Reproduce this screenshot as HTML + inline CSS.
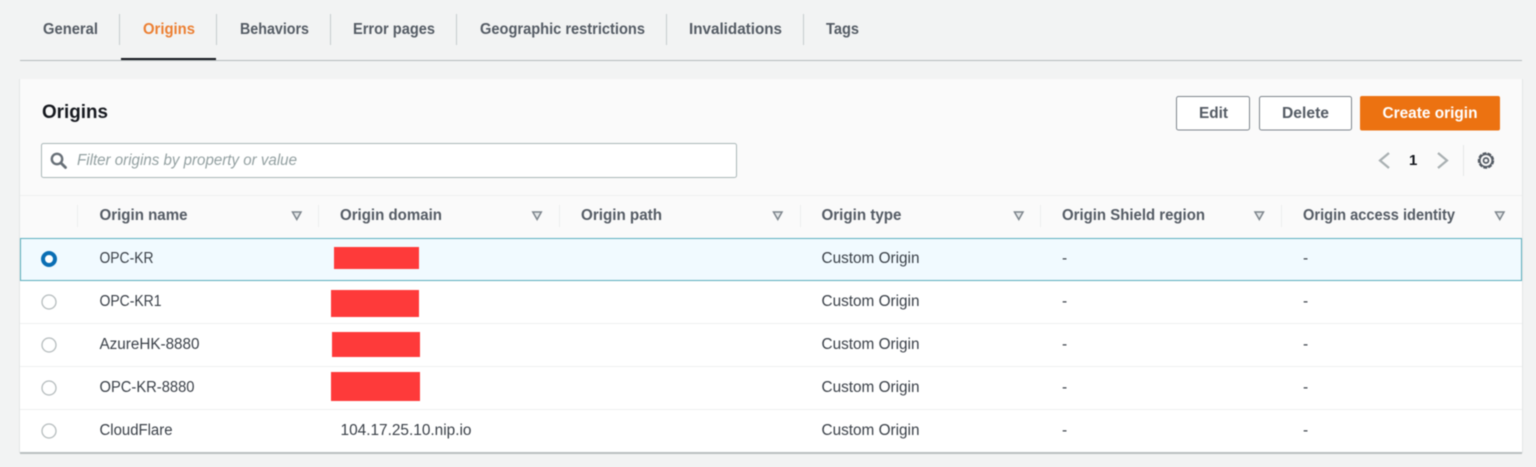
<!DOCTYPE html>
<html>
<head>
<meta charset="utf-8">
<style>
html,body{margin:0;padding:0;width:1536px;height:467px;overflow:hidden;background:#f2f3f3}
svg{display:block;filter:blur(.4px)}
text{font-family:"Liberation Sans",sans-serif;font-size:15.5px;dominant-baseline:auto}
.b{font-weight:700}
.t{fill:#545b64;font-weight:700}
.c{fill:#3a4048}
.h{fill:#545b64;font-weight:700}
</style>
</head>
<body>
<svg width="1536" height="467" viewBox="0 0 1536 467" xmlns="http://www.w3.org/2000/svg">
<rect width="1536" height="467" fill="#f2f3f3"/>

<!-- tabs -->
<text class="t" x="43" y="34" textLength="55" lengthAdjust="spacingAndGlyphs">General</text>
<text class="t" x="143" y="34" textLength="52" lengthAdjust="spacingAndGlyphs" style="fill:#ec7f32">Origins</text>
<text class="t" x="240" y="34" textLength="69" lengthAdjust="spacingAndGlyphs">Behaviors</text>
<text class="t" x="353" y="34" textLength="82" lengthAdjust="spacingAndGlyphs">Error pages</text>
<text class="t" x="480" y="34" textLength="165" lengthAdjust="spacingAndGlyphs">Geographic restrictions</text>
<text class="t" x="689" y="34" textLength="93" lengthAdjust="spacingAndGlyphs">Invalidations</text>
<text class="t" x="826" y="34" textLength="33" lengthAdjust="spacingAndGlyphs">Tags</text>
<g fill="#c6cccd">
<rect x="119" y="14" width="1" height="31"/><rect x="216" y="14" width="1" height="31"/>
<rect x="330" y="14" width="1" height="31"/><rect x="456" y="14" width="1" height="31"/>
<rect x="666" y="14" width="1" height="31"/><rect x="803" y="14" width="1" height="31"/>
</g>
<rect x="20" y="60" width="1502" height="1" fill="#b4bbbc"/>
<rect x="121" y="58" width="95" height="2" fill="#16191f"/>

<!-- card -->
<rect x="20" y="79" width="1502" height="374" fill="#fff"/>
<rect x="20" y="79" width="1502" height="159" fill="#fafafa"/>
<rect x="20" y="452" width="1502" height="2" fill="#b9bfc0"/>
<rect x="19" y="79" width="1" height="374" fill="#e3e6e6"/>
<rect x="1522" y="79" width="1" height="374" fill="#e3e6e6"/>

<text x="42" y="118" textLength="66" lengthAdjust="spacingAndGlyphs" style="font-size:19.5px;font-weight:700;fill:#16191f">Origins</text>

<!-- buttons -->
<rect x="1176.5" y="96.5" width="73" height="33.5" rx="2" fill="#fff" stroke="#7d858c"/>
<text class="t" x="1199" y="118" textLength="29" lengthAdjust="spacingAndGlyphs">Edit</text>
<rect x="1259.5" y="96.5" width="92" height="33.5" rx="2" fill="#fff" stroke="#7d858c"/>
<text class="t" x="1282" y="118" textLength="47" lengthAdjust="spacingAndGlyphs">Delete</text>
<rect x="1360" y="96" width="140" height="34.5" rx="2" fill="#ec7211"/>
<text class="b" x="1382.5" y="118" textLength="95" lengthAdjust="spacingAndGlyphs" style="fill:#fff">Create origin</text>

<!-- filter -->
<rect x="41.5" y="143.5" width="695" height="34" rx="2" fill="#fff" stroke="#aab7b8"/>
<circle cx="57" cy="159" r="5.2" fill="none" stroke="#687078" stroke-width="2.4"/>
<path d="M61 163l4.5 4.5" stroke="#687078" stroke-width="2.8" fill="none" stroke-linecap="round"/>
<text x="77" y="165" textLength="220" lengthAdjust="spacingAndGlyphs" style="font-style:italic;fill:#93a0a1">Filter origins by property or value</text>

<!-- pagination -->
<path d="M1389 153l-9 7.5 9 7.5" fill="none" stroke="#a9b0b2" stroke-width="2.2"/>
<text x="1409" y="165" style="font-weight:700;fill:#16191f;font-size:15px">1</text>
<path d="M1438 153l9 7.5-9 7.5" fill="none" stroke="#a9b0b2" stroke-width="2.2"/>
<rect x="1463" y="145" width="1" height="31" fill="#e6e8e8"/>
<circle cx="1486" cy="160.5" r="7" fill="none" stroke="#545b64" stroke-width="2.4" stroke-dasharray="3.8 1.1"/>
<circle cx="1486" cy="160.5" r="6.2" fill="none" stroke="#545b64" stroke-width="1.6"/>
<circle cx="1486" cy="160.5" r="2.5" fill="none" stroke="#545b64" stroke-width="1.7"/>

<!-- table header -->
<rect x="20" y="195" width="1502" height="1" fill="#eef0f0"/>
<g fill="#eceeee">
<rect x="77" y="205" width="1" height="22"/><rect x="318" y="205" width="1" height="22"/>
<rect x="559" y="205" width="1" height="22"/><rect x="800" y="205" width="1" height="22"/>
<rect x="1040" y="205" width="1" height="22"/><rect x="1281" y="205" width="1" height="22"/>
</g>
<text class="h" x="99.5" y="220" textLength="88" lengthAdjust="spacingAndGlyphs">Origin name</text>
<text class="h" x="340" y="220" textLength="102" lengthAdjust="spacingAndGlyphs">Origin domain</text>
<text class="h" x="581" y="220" textLength="81" lengthAdjust="spacingAndGlyphs">Origin path</text>
<text class="h" x="821.5" y="220" textLength="80" lengthAdjust="spacingAndGlyphs">Origin type</text>
<text class="h" x="1062" y="220" textLength="143" lengthAdjust="spacingAndGlyphs">Origin Shield region</text>
<text class="h" x="1303" y="220" textLength="152" lengthAdjust="spacingAndGlyphs">Origin access identity</text>
<g fill="#e4e7e8" stroke="#7d858c" stroke-width="1.5">
<path d="M292.5 212h8.5l-4.2 7.5z"/><path d="M532.8 212h8.5l-4.2 7.5z"/>
<path d="M773.5 212h8.5l-4.2 7.5z"/><path d="M1014.5 212h8.5l-4.2 7.5z"/>
<path d="M1255 212h8.5l-4.2 7.5z"/><path d="M1495.5 212h8.5l-4.2 7.5z"/>
</g>

<!-- rows -->
<rect x="20.5" y="238.5" width="1501" height="42" fill="#f1faff" stroke="#5aaebd"/>
<g fill="#eef0f0">
<rect x="20" y="323" width="1502" height="1"/><rect x="20" y="366" width="1502" height="1"/><rect x="20" y="409" width="1502" height="1"/>
</g>

<circle cx="49" cy="259" r="6" fill="#fff" stroke="#0a6eb4" stroke-width="4"/>
<g fill="#fff" stroke="#b5bcbd" stroke-width="1.3">
<circle cx="49" cy="302" r="7"/><circle cx="49" cy="345" r="7"/><circle cx="49" cy="388" r="7"/><circle cx="49" cy="431" r="7"/>
</g>

<text class="c" x="99.5" y="263" textLength="54" lengthAdjust="spacingAndGlyphs">OPC-KR</text>
<text class="c" x="99.5" y="306" textLength="62" lengthAdjust="spacingAndGlyphs">OPC-KR1</text>
<text class="c" x="99.5" y="349" textLength="100" lengthAdjust="spacingAndGlyphs">AzureHK-8880</text>
<text class="c" x="99.5" y="392" textLength="95" lengthAdjust="spacingAndGlyphs">OPC-KR-8880</text>
<text class="c" x="99.5" y="435" textLength="73" lengthAdjust="spacingAndGlyphs">CloudFlare</text>

<g fill="#fe3a3a">
<rect x="334" y="247" width="85" height="22"/>
<rect x="331" y="290" width="88" height="27"/>
<rect x="332" y="332" width="88" height="25"/>
<rect x="331" y="372" width="89" height="29"/>
</g>
<text class="c" x="340.5" y="435" textLength="131" lengthAdjust="spacingAndGlyphs">104.17.25.10.nip.io</text>

<g class="c">
<text class="c" x="821.5" y="263" textLength="98" lengthAdjust="spacingAndGlyphs">Custom Origin</text>
<text class="c" x="821.5" y="306" textLength="98" lengthAdjust="spacingAndGlyphs">Custom Origin</text>
<text class="c" x="821.5" y="349" textLength="98" lengthAdjust="spacingAndGlyphs">Custom Origin</text>
<text class="c" x="821.5" y="392" textLength="98" lengthAdjust="spacingAndGlyphs">Custom Origin</text>
<text class="c" x="821.5" y="435" textLength="98" lengthAdjust="spacingAndGlyphs">Custom Origin</text>
</g>
<text class="c" x="1062" y="263">-</text><text class="c" x="1303" y="263">-</text>
<text class="c" x="1062" y="306">-</text><text class="c" x="1303" y="306">-</text>
<text class="c" x="1062" y="349">-</text><text class="c" x="1303" y="349">-</text>
<text class="c" x="1062" y="392">-</text><text class="c" x="1303" y="392">-</text>
<text class="c" x="1062" y="435">-</text><text class="c" x="1303" y="435">-</text>
</svg>
</body>
</html>
